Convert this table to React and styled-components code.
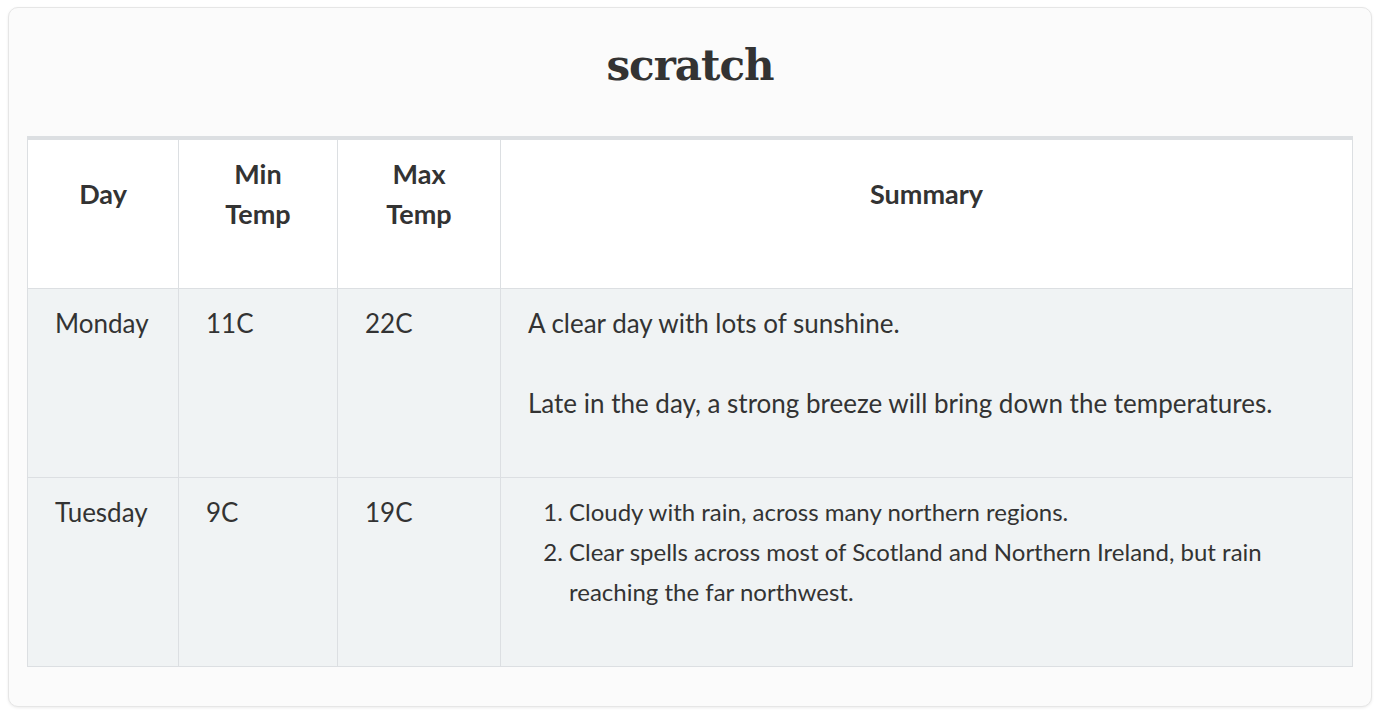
import styled, { createGlobalStyle } from 'styled-components'

const GlobalStyle = createGlobalStyle`
  html, body {
    margin: 0;
    padding: 0;
    background: #ffffff;
  }
  body {
    font-family: Lato, "Open Sans", sans-serif;
    color: #333333;
  }
`

const days = [
    { day: 'Monday', min: '11C', max: '22C', paragraphs: [
        'A clear day with lots of sunshine.',
        'Late in the day, a strong breeze will bring down the temperatures.',
    ] },
    { day: 'Tuesday', min: '9C', max: '19C', list: [
        'Cloudy with rain, across many northern regions.',
        'Clear spells across most of Scotland and Northern Ireland, but rain reaching the far northwest.',
    ] },
]

function App() {
    return (
        <>
            <GlobalStyle />
            <Page>
                <Card>
                    <Title>scratch</Title>
                    <Table>
                        <colgroup>
                            <col style={{ width: 151 }} />
                            <col style={{ width: 159 }} />
                            <col style={{ width: 163 }} />
                            <col />
                        </colgroup>
                        <thead>
                            <tr>
                                <HeadCell>Day</HeadCell>
                                <HeadCell>Min<br />Temp</HeadCell>
                                <HeadCell>Max<br />Temp</HeadCell>
                                <HeadCell>Summary</HeadCell>
                            </tr>
                        </thead>
                        <tbody>
                            {days.map(d => (
                                <Row key={d.day}>
                                    <Cell>{d.day}</Cell>
                                    <Cell>{d.min}</Cell>
                                    <Cell>{d.max}</Cell>
                                    <Cell>
                                        {d.paragraphs && d.paragraphs.map(p => (
                                            <Para key={p}>{p}</Para>
                                        ))}
                                        {d.list && (
                                            <List>
                                                {d.list.map(item => <li key={item}>{item}</li>)}
                                            </List>
                                        )}
                                    </Cell>
                                </Row>
                            ))}
                        </tbody>
                    </Table>
                </Card>
            </Page>
        </>
    )
}

export default App

const Page = styled.div`
    padding: 7px 8px 6px 8px;
`

const Card = styled.div`
    background: #fbfbfb;
    border: 1px solid #e6e6e6;
    border-radius: 10px;
    box-shadow: 0 1px 3px rgba(0, 0, 0, 0.08);
    padding: 0 18px 39px 18px;
`

const Title = styled.h1`
    margin: 0;
    padding: 27px 0 39px;
    text-align: center;
    font-family: "DejaVu Serif", "Liberation Serif", serif;
    font-weight: bold;
    font-size: 42px;
    line-height: 62px;
    letter-spacing: -1px;
    color: #333333;
`

const Table = styled.table`
    width: 100%;
    table-layout: fixed;
    border-collapse: collapse;
    border: 1px solid #dcdfe2;
    border-top: 4px solid #dcdfe2;
`

const HeadCell = styled.th`
    background: #ffffff;
    border: 1px solid #dcdfe2;
    padding: 14px 16px 54px;
    vertical-align: middle;
    text-align: center;
    font-weight: bold;
    font-size: 27px;
    line-height: 40px;
    color: #333333;
`

const Row = styled.tr`
    background: #f0f3f4;
`

const Cell = styled.td`
    border: 1px solid #dcdfe2;
    padding: 14px 16px 54px 27px;
    vertical-align: top;
    text-align: left;
    font-size: 26px;
    line-height: 40px;
    color: #333333;
`

const Para = styled.p`
    margin: 0 0 40px;

    &:last-child {
        margin-bottom: 0;
    }
`

const List = styled.ol`
    margin: 0;
    padding-left: 41px;
    font-size: 24px;
    line-height: 40px;
`
